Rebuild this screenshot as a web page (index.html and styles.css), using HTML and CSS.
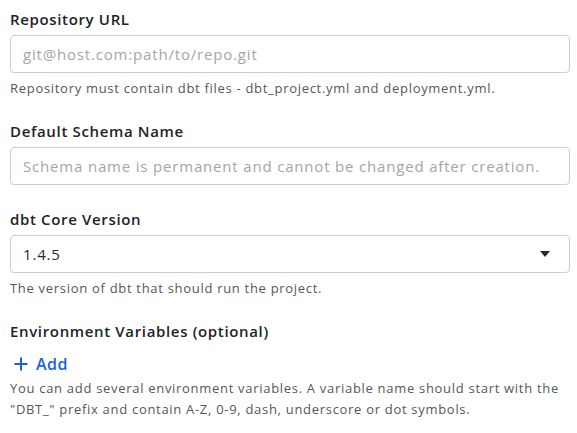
FILE: index.html
```html
<!DOCTYPE html>
<html lang="en">
<head>
<meta charset="utf-8">
<link rel="stylesheet" href="styles.css">
</head>
<body>
<form class="form">
  <div class="field">
    <label class="label">Repository URL</label>
    <div class="input placeholder">git@host.com:path/to/repo.git</div>
    <p class="help">Repository must contain dbt files - dbt_project.yml and deployment.yml.</p>
  </div>
  <div class="field">
    <label class="label">Default Schema Name</label>
    <div class="input placeholder">Schema name is permanent and cannot be changed after creation.</div>
  </div>
  <div class="field">
    <label class="label">dbt Core Version</label>
    <div class="input select"><span class="value">1.4.5</span><span class="caret"></span></div>
    <p class="help">The version of dbt that should run the project.</p>
  </div>
  <div class="field">
    <label class="label">Environment Variables (optional)</label>
    <div class="add"><svg class="plus" width="14" height="14" viewBox="0 0 14 14"><path d="M7 0.5V13.5M0.5 7H13.5" stroke="#1a5fe0" stroke-width="2"/></svg><span>Add</span></div>
    <p class="help multi">You can add several environment variables. A variable name should start with the "DBT_" prefix and contain A-Z, 0-9, dash, underscore or dot symbols.</p>
  </div>
</form>
</body>
</html>
```

FILE: styles.css
```css
* { box-sizing: border-box; }
body {
  margin: 0;
  padding: 10px 7px 0 10px;
  background: #fff;
  font-family: "Open Sans", "Liberation Sans", sans-serif;
  color: #2a2b2f;
}
.form { display: flex; flex-direction: column; gap: 25px; width: 560px; }
.field { display: flex; flex-direction: column; }
.label {
  font-size: 15px;
  line-height: 18px;
  font-weight: 600;
  letter-spacing: 0.65px;
  color: #222327;
  margin-bottom: 7px;
}
.input {
  height: 38px;
  border: 1px solid #c9cbd1;
  border-radius: 4px;
  padding: 0 12px;
  display: flex;
  align-items: center;
  font-size: 15px;
  letter-spacing: 0.82px;
}
.placeholder { color: #a3a5ab; }
.select { justify-content: space-between; color: #2a2b2f; padding-right: 19px; }
.caret {
  width: 0; height: 0;
  border-left: 5px solid transparent;
  border-right: 5px solid transparent;
  border-top: 6px solid #2a2b2f;
}
.help {
  margin: 6px 0 0;
  font-size: 13px;
  line-height: 18px;
  letter-spacing: 0.7px;
  color: #55575c;
}
.add {
  margin-top: 8px;
  display: flex;
  align-items: center;
  gap: 8px;
  padding-left: 4px;
  color: #1a5fe0;
  font-size: 16px;
  font-weight: 600;
  letter-spacing: 0.5px;
  line-height: 18px;
}
.help.multi { margin-top: 5px; line-height: 21px; }
```
